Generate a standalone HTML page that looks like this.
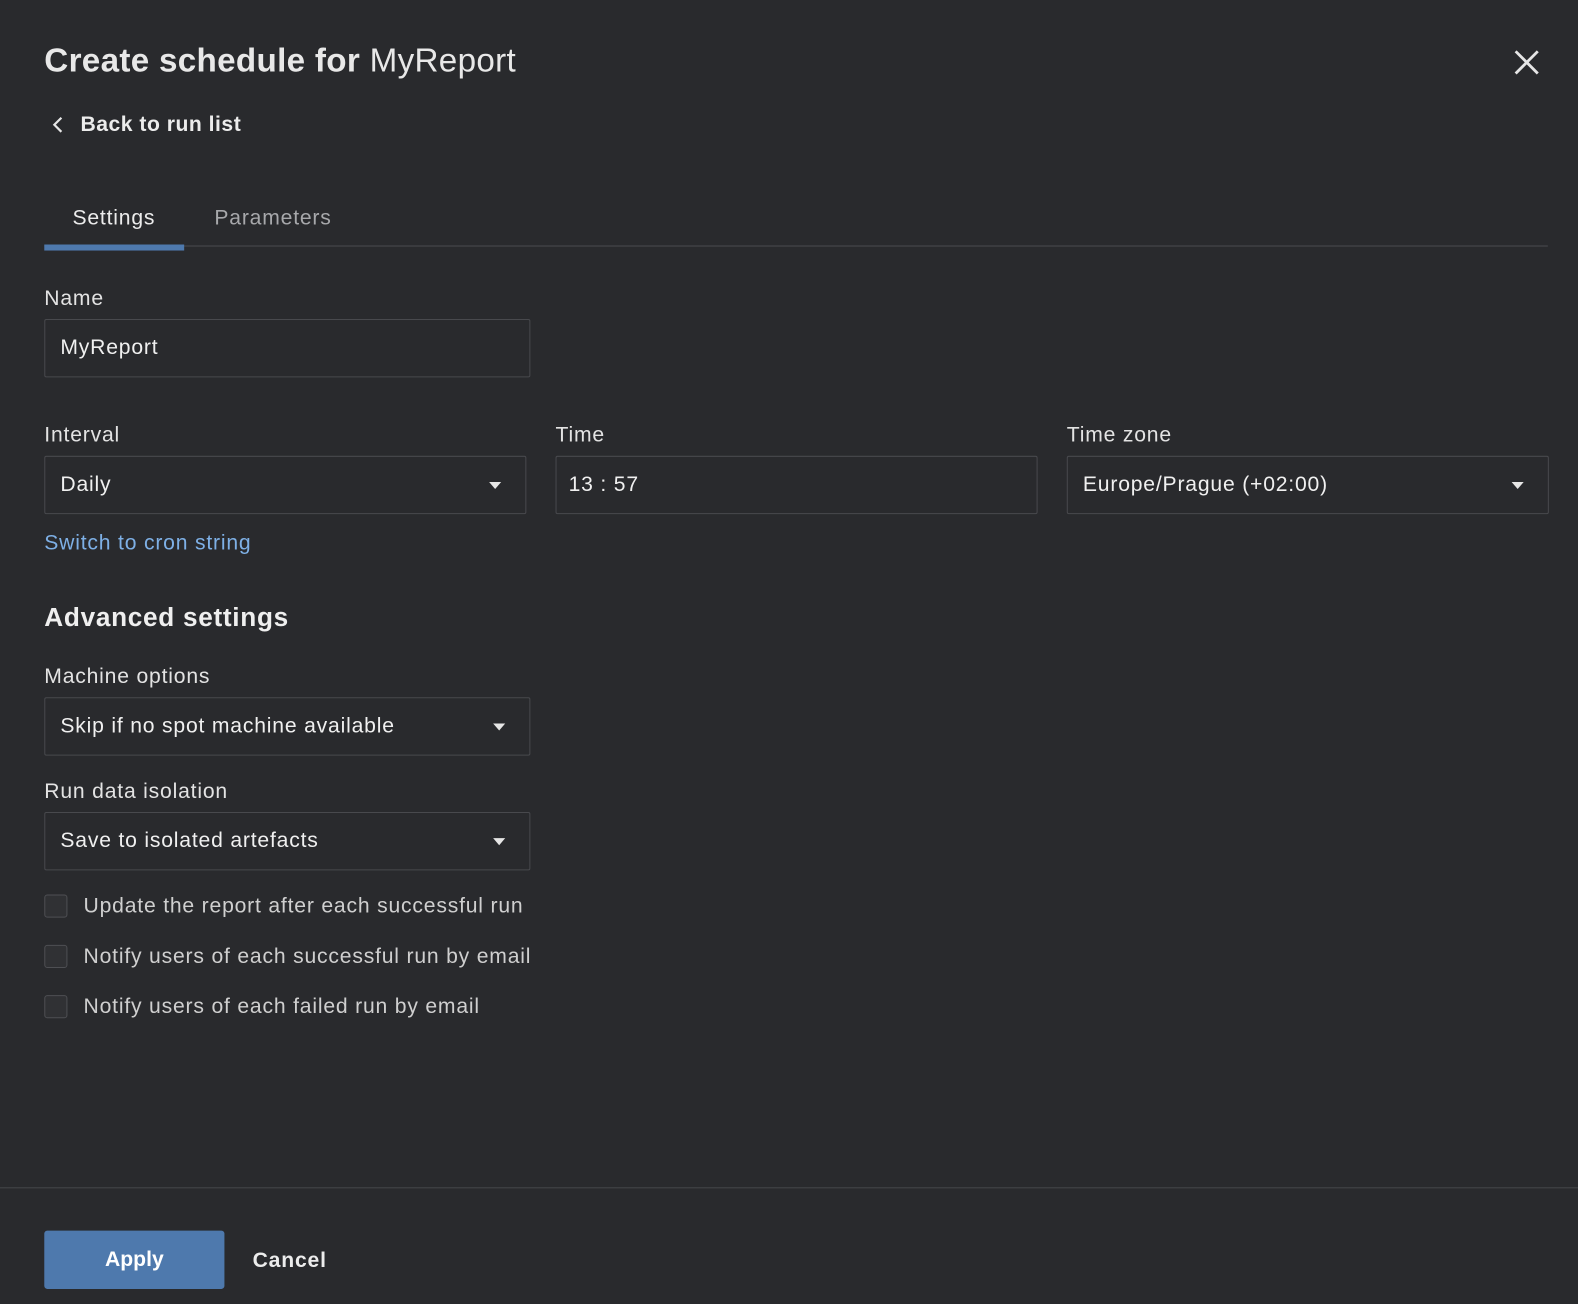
<!DOCTYPE html>
<html><head><meta charset="utf-8"><style>
html,body{margin:0;padding:0;background:#292a2d;width:1578px;height:1304px;overflow:hidden}
#w{position:absolute;left:0;top:0;width:1568px;height:1296px;transform:scale(1.0064,1.0062);transform-origin:0 0;font-family:"Liberation Sans",sans-serif;color:#e6e6e6}
.a{position:absolute;white-space:nowrap}
.t{font-size:21px;letter-spacing:0.8px}
.lbl{color:#e3e3e3}
.box{position:absolute;border:1px solid #48494d;border-radius:2px;box-sizing:border-box;height:58px;background:#292a2d}
.box span{position:absolute;left:15px;top:16px;color:#f0f0f0;font-size:21px;letter-spacing:0.8px}
.caret{position:absolute;top:25px;width:0;height:0;border-left:6px solid transparent;border-right:6px solid transparent;border-top:7px solid #e6e6e6}
.cb{position:absolute;left:44px;width:23px;height:23px;border:1px solid #4e4f53;border-radius:3px;box-sizing:border-box;background:#303134}
.cbt{position:absolute;left:83px;color:#cfcfcf}
</style></head><body><div id="w">
<div class="a" style="left:44px;top:41px;font-size:33px;letter-spacing:0.3px;color:#e8e8e8"><b>Create schedule for</b> MyReport</div>
<svg class="a" style="left:1503px;top:48px" width="28" height="28" viewBox="0 0 28 28"><path d="M3 3L25 25M25 3L3 25" stroke="#e6e6e6" stroke-width="2.8"/></svg>
<svg class="a" style="left:51px;top:115px" width="14" height="18" viewBox="0 0 14 18"><path d="M10 2L3 9L10 16" stroke="#e6e6e6" stroke-width="2.2" fill="none"/></svg>
<div class="a" style="left:80px;top:112px;font-size:21px;letter-spacing:0.5px;font-weight:bold;color:#ececec">Back to run list</div>
<div class="a t" style="left:72px;top:205px;color:#ececec">Settings</div>
<div class="a t" style="left:213px;top:205px;color:#a7a8ab">Parameters</div>
<div class="a" style="left:44px;top:244px;width:1494px;height:1px;background:#4a4b4f"></div>
<div class="a" style="left:44px;top:243px;width:139px;height:6px;background:#4e79ad"></div>
<div class="a lbl t" style="left:44px;top:285px">Name</div>
<div class="box" style="left:44px;top:317px;width:483px"><span>MyReport</span></div>
<div class="a lbl t" style="left:44px;top:421px">Interval</div>
<div class="box" style="left:44px;top:453px;width:479px"><span>Daily</span><div class="caret" style="left:441px"></div></div>
<div class="a lbl t" style="left:552px;top:421px">Time</div>
<div class="box" style="left:552px;top:453px;width:479px"><span style="left:12px">13 : 57</span></div>
<div class="a lbl t" style="left:1060px;top:421px">Time zone</div>
<div class="box" style="left:1060px;top:453px;width:479px"><span>Europe/Prague (+02:00)</span><div class="caret" style="left:441px"></div></div>
<div class="a t" style="left:44px;top:528px;color:#7eb0e6">Switch to cron string</div>
<div class="a" style="left:44px;top:598px;font-size:26px;letter-spacing:0.7px;font-weight:bold;color:#efefef">Advanced settings</div>
<div class="a lbl t" style="left:44px;top:661px">Machine options</div>
<div class="box" style="left:44px;top:693px;width:483px"><span>Skip if no spot machine available</span><div class="caret" style="left:445px"></div></div>
<div class="a lbl t" style="left:44px;top:775px">Run data isolation</div>
<div class="box" style="left:44px;top:807px;width:483px"><span>Save to isolated artefacts</span><div class="caret" style="left:445px"></div></div>
<div class="cb" style="top:889px"></div><div class="a cbt t" style="top:889px">Update the report after each successful run</div>
<div class="cb" style="top:939px"></div><div class="a cbt t" style="top:939px">Notify users of each successful run by email</div>
<div class="cb" style="top:989px"></div><div class="a cbt t" style="top:989px">Notify users of each failed run by email</div>
<div class="a" style="left:0;top:1180px;width:1568px;height:1px;background:#46474b"></div>
<div class="a" style="left:44px;top:1223px;width:179px;height:58px;background:#4e79ad;border-radius:3px;color:#fff;font-weight:bold;font-size:21px;text-align:center;line-height:58px">Apply</div>
<div class="a" style="left:251px;top:1241px;font-size:21px;letter-spacing:0.8px;font-weight:bold;color:#ececec">Cancel</div>
</div></body></html>
